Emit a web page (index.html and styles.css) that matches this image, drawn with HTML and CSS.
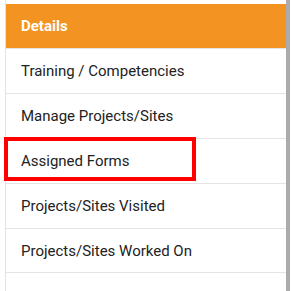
FILE: index.html
```html
<!DOCTYPE html>
<html lang="en">
<head>
    <meta charset="UTF-8">
    <title>Details</title>
    <link rel="stylesheet" href="styles.css">
</head>
<body>
    <div class="wrap">
        <div class="panel">
            <div class="head">Details</div>
            <ul class="menu">
                <li>Training / Competencies</li>
                <li>Manage Projects/Sites</li>
                <li class="marked">Assigned Forms<span class="mark"></span></li>
                <li>Projects/Sites Visited</li>
                <li>Projects/Sites Worked On</li>
            </ul>
        </div>
        <div class="bar"></div>
    </div>
</body>
</html>
```

FILE: styles.css
```css
* {
    padding: 0;
    margin: 0;
    box-sizing: border-box;
}
body {
    background: #fff;
    font-family: Roboto, "Liberation Sans", sans-serif;
    font-size: 15px;
    color: #222;
}
.wrap {
    display: flex;
    height: 291px;
    padding-left: 5px;
}
.panel {
    width: 281px;
    height: 100%;
    padding-top: 4px;
    border-left: 1px solid #e2e2e2;
}
.bar {
    width: 4px;
    height: 100%;
    background: #ababab;
}
.head {
    height: 44px;
    line-height: 44px;
    padding-left: 15px;
    background: #f39322;
    color: #fff;
    font-weight: bold;
}
.menu {
    list-style: none;
}
.menu li {
    position: relative;
    height: 45px;
    line-height: 44px;
    padding-left: 15px;
    border-top: 1px solid #e4e4e4;
}
.menu li:last-child {
    border-bottom: 1px solid #e4e4e4;
}
.mark {
    position: absolute;
    top: -2px;
    left: -2px;
    width: 192px;
    height: 44px;
    border: 4px solid #f00;
}
```
